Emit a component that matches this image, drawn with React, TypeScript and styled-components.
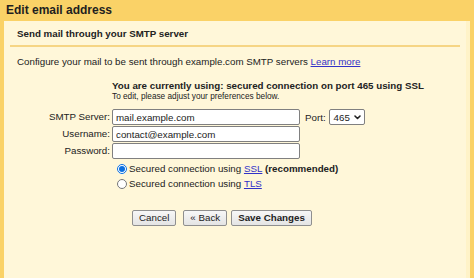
import styled, { createGlobalStyle } from "styled-components";

const GlobalStyle = createGlobalStyle`
  html, body {
    margin: 0;
    padding: 0;
    background: #fad267;
    font-family: "Liberation Sans", Arial, sans-serif;
    color: #222;
  }
`;

const Frame = styled.div`
  width: 474px;
  height: 278px;
  overflow: hidden;
  background: #fad267;
`;

const Title = styled.h1`
  margin: 0;
  height: 21px;
  padding-left: 6px;
  font-size: 12px;
  line-height: 21px;
  font-weight: bold;
  color: #1f1f1f;
`;

const Panel = styled.div`
  margin: 0 4px;
  min-height: 257px;
  background: #fff7d9;
  border-right: 4px solid #fff3c8;
`;

const SubTitle = styled.h2`
  margin: 0;
  padding: 7px 13px 0;
  font-size: 9.75px;
  line-height: 12px;
  font-weight: bold;
`;

const Divider = styled.div`
  height: 2px;
  margin: 5px 6px 0;
  background: #f6d584;
`;

const Intro = styled.p`
  margin: 9px 0 0;
  padding-left: 13px;
  font-size: 9.75px;
  line-height: 12px;
`;

const Link = styled.a`
  color: #3232c8;
  text-decoration: underline;
  cursor: pointer;
`;

const Status = styled.div`
  margin-top: 12px;
  padding-left: 108px;
`;

const StatusLine = styled.div`
  font-size: 9.75px;
  line-height: 12px;
  font-weight: bold;
`;

const Hint = styled.div`
  font-size: 8.25px;
  line-height: 10px;
`;

const Form = styled.div`
  margin-top: 7px;
  display: grid;
  grid-template-columns: 106px auto;
  column-gap: 2px;
  row-gap: 1px;
  align-items: center;
  font-size: 9.75px;
`;

const Label = styled.label`
  text-align: right;
  line-height: 16px;
`;

const Field = styled.div`
  display: flex;
  align-items: center;
  height: 16px;
`;

const Input = styled.input`
  box-sizing: border-box;
  width: 188px;
  height: 16px;
  padding: 0 3px;
  border: 1px solid #808080;
  border-radius: 2px;
  background: #fff;
  font-family: "Liberation Sans", Arial, sans-serif;
  font-size: 9.75px;
  color: #222;
  outline: none;
`;

const PortLabel = styled.span`
  margin: 0 3px 0 5px;
`;

const Select = styled.div`
  box-sizing: border-box;
  display: flex;
  align-items: center;
  justify-content: space-between;
  width: 36px;
  height: 16px;
  padding: 0 3px 0 4px;
  border: 1px solid #808080;
  border-radius: 2px;
  background: #fff;
  color: #222;
`;

const Options = styled.div`
  grid-column: 2;
  display: flex;
  flex-direction: column;
  margin-top: 1px;
`;

const RadioRow = styled.label`
  display: flex;
  align-items: center;
  height: 15px;
`;

const Radio = styled.input`
  width: 10px;
  height: 10px;
  margin: 0 2px 0 5px;
  accent-color: #0b6fe0;
`;

const Strong = styled.b`
  font-weight: bold;
`;

const Buttons = styled.div`
  display: flex;
  margin-top: 19px;
  padding-left: 128px;
`;

const Button = styled.button<{ $primary?: boolean; $gap?: number }>`
  box-sizing: border-box;
  height: 16px;
  margin-right: ${(p) => p.$gap ?? 0}px;
  padding: 0 6px;
  border: 1px solid #8f8f8f;
  border-radius: 2px;
  background: linear-gradient(#f7f7f7, #e4e4e4);
  font-family: "Liberation Sans", Arial, sans-serif;
  font-size: 9.75px;
  font-weight: ${(p) => (p.$primary ? "bold" : "normal")};
  color: #222;
  line-height: 14px;
`;

function Chevron() {
  return (
    <svg width="7" height="5" viewBox="0 0 7 5">
      <path
        d="M1 1 L3.5 3.5 L6 1"
        fill="none"
        stroke="#222"
        strokeWidth="1.6"
        strokeLinecap="round"
        strokeLinejoin="round"
      />
    </svg>
  );
}

export default function App() {
  return (
    <Frame>
      <GlobalStyle />
      <Title>Edit email address</Title>
      <Panel>
        <SubTitle>Send mail through your SMTP server</SubTitle>
        <Divider />
        <Intro>
          Configure your mail to be sent through example.com SMTP servers{" "}
          <Link>Learn more</Link>
        </Intro>
        <Status>
          <StatusLine>
            You are currently using: secured connection on port 465 using SSL
          </StatusLine>
          <Hint>To edit, please adjust your preferences below.</Hint>
        </Status>
        <Form>
          <Label>SMTP Server:</Label>
          <Field>
            <Input defaultValue="mail.example.com" />
            <PortLabel>Port:</PortLabel>
            <Select role="listbox">
              465
              <Chevron />
            </Select>
          </Field>
          <Label>Username:</Label>
          <Field>
            <Input defaultValue="contact@example.com" />
          </Field>
          <Label>Password:</Label>
          <Field>
            <Input type="password" />
          </Field>
          <Options>
            <RadioRow>
              <Radio type="radio" name="sec" defaultChecked />
              Secured connection using&nbsp;<Link>SSL</Link>&nbsp;
              <Strong>(recommended)</Strong>
            </RadioRow>
            <RadioRow>
              <Radio type="radio" name="sec" />
              Secured connection using&nbsp;<Link>TLS</Link>
            </RadioRow>
          </Options>
        </Form>
        <Buttons>
          <Button $gap={7}>Cancel</Button>
          <Button $gap={4}>« Back</Button>
          <Button $primary>Save Changes</Button>
        </Buttons>
      </Panel>
    </Frame>
  );
}
